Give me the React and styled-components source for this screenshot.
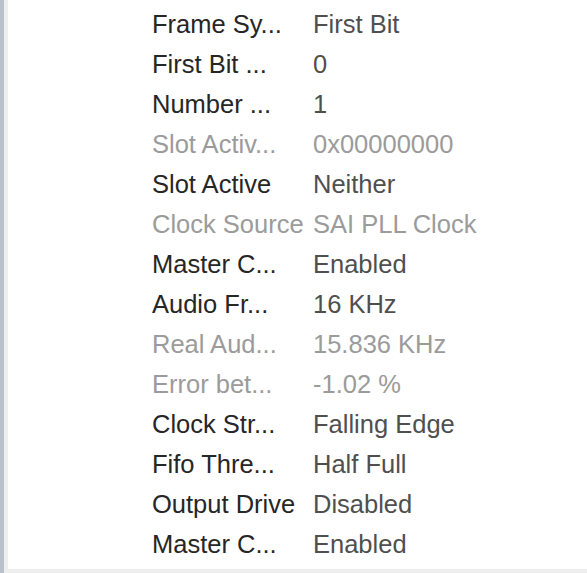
import React from "react";
import styled, { createGlobalStyle } from "styled-components";

const GlobalStyle = createGlobalStyle`
    html, body {
        margin: 0;
        padding: 0;
        background: #ffffff;
    }
    body {
        font-family: "Liberation Sans", Arial, sans-serif;
    }
`;

const rows = [
    { label: "Frame Sy...", value: "First Bit" },
    { label: "First Bit ...", value: "0" },
    { label: "Number ...", value: "1" },
    { label: "Slot Activ...", value: "0x00000000", disabled: true },
    { label: "Slot Active", value: "Neither" },
    { label: "Clock Source", value: "SAI PLL Clock", disabled: true },
    { label: "Master C...", value: "Enabled" },
    { label: "Audio Fr...", value: "16 KHz" },
    { label: "Real Aud...", value: "15.836 KHz", disabled: true },
    { label: "Error bet...", value: "-1.02 %", disabled: true },
    { label: "Clock Str...", value: "Falling Edge" },
    { label: "Fifo Thre...", value: "Half Full" },
    { label: "Output Drive", value: "Disabled" },
    { label: "Master C...", value: "Enabled" },
];

function App() {
    return (
        <>
            <GlobalStyle />
            <Frame>
                <SideBar />
                <Panel>
                    <PropGrid>
                        {rows.map((row, i) => (
                            <React.Fragment key={i}>
                                <Label disabled={row.disabled}>{row.label}</Label>
                                <Value disabled={row.disabled}>{row.value}</Value>
                            </React.Fragment>
                        ))}
                    </PropGrid>
                </Panel>
            </Frame>
        </>
    );
}

export default App;

const Frame = styled.div`
    display: flex;
    width: 587px;
    height: 573px;
`;

const SideBar = styled.div`
    width: 4px;
    flex-shrink: 0;
    background: #b9c2cb;
`;

const Panel = styled.div`
    flex: 1;
    border-left: 4px solid #eeeeee;
    border-bottom: 4px solid #eeeeee;
    padding: 4px 0 0 144px;
    box-sizing: border-box;
`;

const PropGrid = styled.div`
    display: grid;
    grid-template-columns: 161px auto;
    grid-auto-rows: 40px;
    font-size: 25.5px;
    line-height: 40px;
`;

const Label = styled.div`
    white-space: nowrap;
    color: ${(props) => (props.disabled ? "#9b9b9b" : "#262626")};
`;

const Value = styled.div`
    white-space: nowrap;
    color: ${(props) => (props.disabled ? "#9b9b9b" : "#4f4f4f")};
`;
